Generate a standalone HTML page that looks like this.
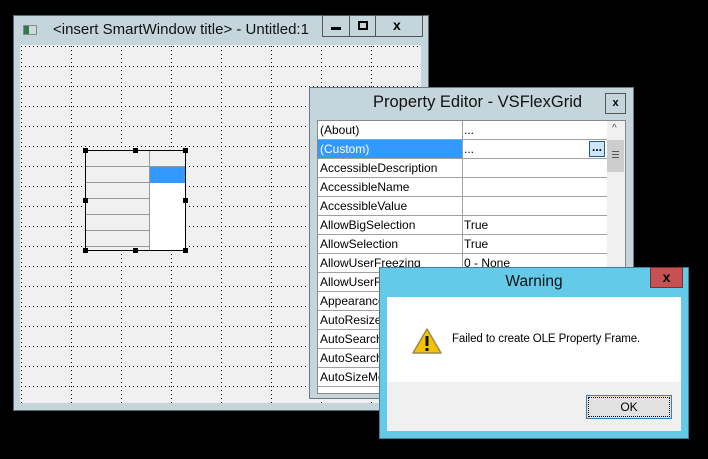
<!DOCTYPE html>
<html><head><meta charset="utf-8"><style>
*{margin:0;padding:0;box-sizing:border-box}
body{width:708px;height:459px;background:#000;position:relative;overflow:hidden;font-family:"Liberation Sans",sans-serif;font-size:12px;color:#000}
.abs{position:absolute}
.pe-row{position:absolute;left:0;width:289px;height:19px;border-bottom:1px solid #a0a0a0;}
.pe-row .n{position:absolute;left:2px;top:2px;width:143px}
.pe-row .v{position:absolute;left:146px;top:2px}
.pe-row .sep{position:absolute;left:144px;top:0;width:1px;height:19px;background:#a0a0a0}
</style></head><body>
<!-- main window -->
<div class="abs" style="left:13px;top:15px;width:416px;height:396px;background:#c4d6dc;border:1px solid #5a6a70"></div>
<div class="abs" style="left:23px;top:25px;width:14px;height:10px;background:#cfd8dc;border:1px solid #888"><div style="width:5px;height:8px;background:#2e7a4a"></div></div>
<div class="abs" style="left:53px;top:21px;font-size:15px;color:#111">&lt;insert SmartWindow title&gt; - Untitled:1</div>
<div class="abs" style="left:322px;top:15px;width:101px;height:22px;border:1px solid #555;background:#c4d6dc"></div>
<div class="abs" style="left:349px;top:15px;width:1px;height:22px;background:#555"></div>
<div class="abs" style="left:375px;top:15px;width:1px;height:22px;background:#555"></div>
<div class="abs" style="left:331px;top:27px;width:10px;height:3px;background:#000"></div>
<div class="abs" style="left:358px;top:21px;width:10px;height:9px;border:2px solid #000"></div>
<div class="abs" style="left:393px;top:17px;font-size:14px;font-weight:bold">x</div>
<svg class="abs" style="left:20px;top:45px" width="401" height="358">
<defs>
<pattern id="h" width="4" height="20" patternUnits="userSpaceOnUse" x="1" y="1"><rect width="1" height="1" fill="#000"/></pattern>
<pattern id="v" width="50" height="4" patternUnits="userSpaceOnUse" x="1" y="1"><rect width="1" height="1" fill="#000"/></pattern>
</defs>
<rect width="401" height="358" fill="#f0f0f0"/>
<rect width="401" height="358" fill="url(#h)"/>
<rect width="401" height="358" fill="url(#v)"/>
</svg>
<!-- grid control -->
<div class="abs" style="left:85px;top:150px;width:101px;height:101px;border:1px solid #000;background:#f0f0f0;overflow:hidden">
<div class="abs" style="left:63px;top:0;width:1px;height:100px;background:#999"></div>
<div class="abs" style="left:64px;top:16px;width:36px;height:16px;background:#3399ff"></div>
<div class="abs" style="left:64px;top:32px;width:36px;height:70px;background:#fff"></div>
<div class="abs" style="left:0;top:15px;width:100px;height:1px;background:#999"></div>
<div class="abs" style="left:0;top:31px;width:63px;height:1px;background:#999"></div>
<div class="abs" style="left:0;top:47px;width:63px;height:1px;background:#999"></div>
<div class="abs" style="left:0;top:63px;width:63px;height:1px;background:#999"></div>
<div class="abs" style="left:0;top:79px;width:63px;height:1px;background:#999"></div>
<div class="abs" style="left:0;top:95px;width:63px;height:1px;background:#999"></div>
</div>
<div class="abs" style="left:83px;top:148px;width:5px;height:5px;background:#000"></div>
<div class="abs" style="left:133px;top:148px;width:5px;height:5px;background:#000"></div>
<div class="abs" style="left:183px;top:148px;width:5px;height:5px;background:#000"></div>
<div class="abs" style="left:83px;top:198px;width:5px;height:5px;background:#000"></div>
<div class="abs" style="left:183px;top:198px;width:5px;height:5px;background:#000"></div>
<div class="abs" style="left:83px;top:248px;width:5px;height:5px;background:#000"></div>
<div class="abs" style="left:133px;top:248px;width:5px;height:5px;background:#000"></div>
<div class="abs" style="left:183px;top:248px;width:5px;height:5px;background:#000"></div>
<!-- property editor -->
<div class="abs" style="left:309px;top:87px;width:325px;height:312px;background:#c4d6dc;border:1px solid #6a7a80"></div>
<div class="abs" style="left:309px;top:93px;width:325px;text-align:center;font-size:16.5px;color:#111;padding-left:12px">Property Editor - VSFlexGrid</div>
<div class="abs" style="left:605px;top:93px;width:21px;height:21px;border:1px solid #555;font-size:11px;font-weight:bold;text-align:center;line-height:18px">x</div>
<div class="abs" style="left:317px;top:120px;width:309px;height:274px;background:#fff;border:1px solid #888;overflow:hidden">
<div class="pe-row" style="top:0"><span class="n">(About)</span><span class="sep"></span><span class="v">...</span></div>
<div class="pe-row" style="top:19px"><span class="n" style="left:0;top:0;height:18px;padding:2px;background:#3399ff;color:#fff;width:144px">(Custom)</span><span class="sep"></span><span class="v">...</span><span style="position:absolute;left:271px;top:1px;width:16px;height:16px;border:1px solid #2a5a8a;background:#cde6f7;font-weight:bold;text-align:center;line-height:10px">...</span></div>
<div class="pe-row" style="top:38px"><span class="n">AccessibleDescription</span><span class="sep"></span></div>
<div class="pe-row" style="top:57px"><span class="n">AccessibleName</span><span class="sep"></span></div>
<div class="pe-row" style="top:76px"><span class="n">AccessibleValue</span><span class="sep"></span></div>
<div class="pe-row" style="top:95px"><span class="n">AllowBigSelection</span><span class="sep"></span><span class="v">True</span></div>
<div class="pe-row" style="top:114px"><span class="n">AllowSelection</span><span class="sep"></span><span class="v">True</span></div>
<div class="pe-row" style="top:133px"><span class="n">AllowUserFreezing</span><span class="sep"></span><span class="v">0 - None</span></div>
<div class="pe-row" style="top:152px"><span class="n">AllowUserResizing</span><span class="sep"></span></div>
<div class="pe-row" style="top:171px"><span class="n">Appearance</span><span class="sep"></span></div>
<div class="pe-row" style="top:190px"><span class="n">AutoResize</span><span class="sep"></span></div>
<div class="pe-row" style="top:209px"><span class="n">AutoSearch</span><span class="sep"></span></div>
<div class="pe-row" style="top:228px"><span class="n">AutoSearchDelay</span><span class="sep"></span></div>
<div class="pe-row" style="top:247px"><span class="n">AutoSizeMode</span><span class="sep"></span></div>
<div class="abs" style="left:289px;top:0;width:18px;height:274px;background:#f0f0f0"></div>
<div class="abs" style="left:289px;top:19px;width:17px;height:32px;background:#cdcdcd"></div>
<div class="abs" style="left:294px;top:2px;font-size:10px;color:#555">^</div>
<div class="abs" style="left:294px;top:30px;width:7px;height:1px;background:#555;box-shadow:0 3px #555,0 6px #555"></div>
</div>
<!-- warning -->
<div class="abs" style="left:379px;top:267px;width:310px;height:172px;background:#65c9e8;border:1px solid #3f7f96"></div>
<div class="abs" style="left:379px;top:273px;width:310px;text-align:center;font-size:15.5px;color:#111">Warning</div>
<div class="abs" style="left:650px;top:267px;width:33px;height:21px;background:#c75050;border:1px solid #7a3030;font-size:14px;font-weight:bold;text-align:center;line-height:18px">x</div>
<div class="abs" style="left:387px;top:297px;width:294px;height:85px;background:#fff"></div>
<div class="abs" style="left:387px;top:382px;width:294px;height:49px;background:#f0f0f0"></div>
<svg class="abs" style="left:411px;top:327px" width="32" height="28"><path d="M16 2 L30 26 L2 26 Z" fill="#f5c400" stroke="#9a8a50" stroke-width="1.5" stroke-linejoin="round"/><rect x="14.5" y="9" width="3" height="10" fill="#111"/><rect x="14.5" y="21" width="3" height="3" fill="#111"/></svg>
<div class="abs" style="left:452px;top:333px;font-size:11.5px;letter-spacing:-0.1px">Failed to create OLE Property Frame.</div>
<div class="abs" style="left:586px;top:395px;width:86px;height:24px;border:1px solid #3c7fb1;background:#e1e1e1"><div style="position:absolute;left:1px;top:1px;right:1px;bottom:1px;border:1px dotted #000;text-align:center;line-height:18px">OK</div></div>
</body></html>
